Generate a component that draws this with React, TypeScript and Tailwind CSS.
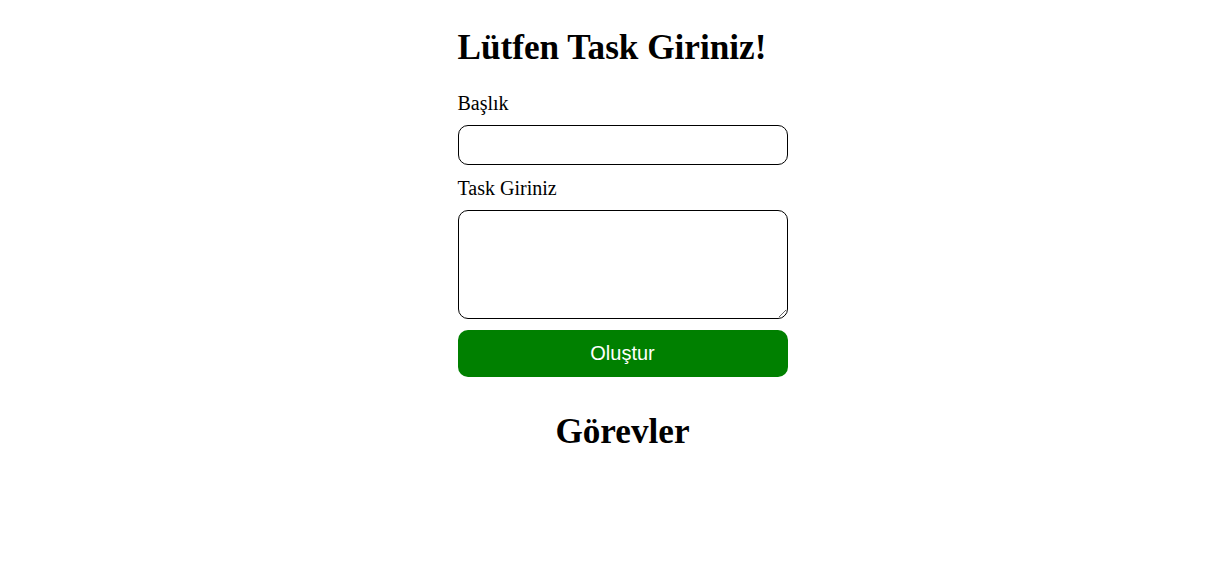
export default function App() {
  return (
    <div className="min-h-[576px] bg-white pl-[14px] text-black" style={{ fontFamily: '"Liberation Serif", "Times New Roman", serif' }}>
      <div className="mx-auto flex w-[330px] flex-col pt-[28px]">
        <h1 className="text-[35.2px] font-bold leading-[40px] whitespace-nowrap">Lütfen Task Giriniz!</h1>
        <label className="mt-[24px] text-[20px] leading-[23px]">Başlık</label>
        <input
          type="text"
          className="mt-[10px] h-[40px] w-full rounded-[10px] border border-black bg-white px-2 text-[20px] outline-none"
        />
        <label className="mt-[12px] text-[20px] leading-[23px]">Task Giriniz</label>
        <textarea className="mt-[10px] h-[109px] w-full resize-y rounded-[10px] border border-black bg-white px-2 text-[20px] outline-none" />
        <button
          className="mt-[11px] h-[47px] w-full rounded-[10px] bg-[#008000] pb-[2px] text-[20px] text-white"
          style={{ fontFamily: '"Liberation Sans", Arial, sans-serif' }}
        >
          Oluştur
        </button>
        <h1 className="mt-[35px] text-center text-[35.2px] font-bold leading-[40px]">Görevler</h1>
      </div>
    </div>
  );
}
